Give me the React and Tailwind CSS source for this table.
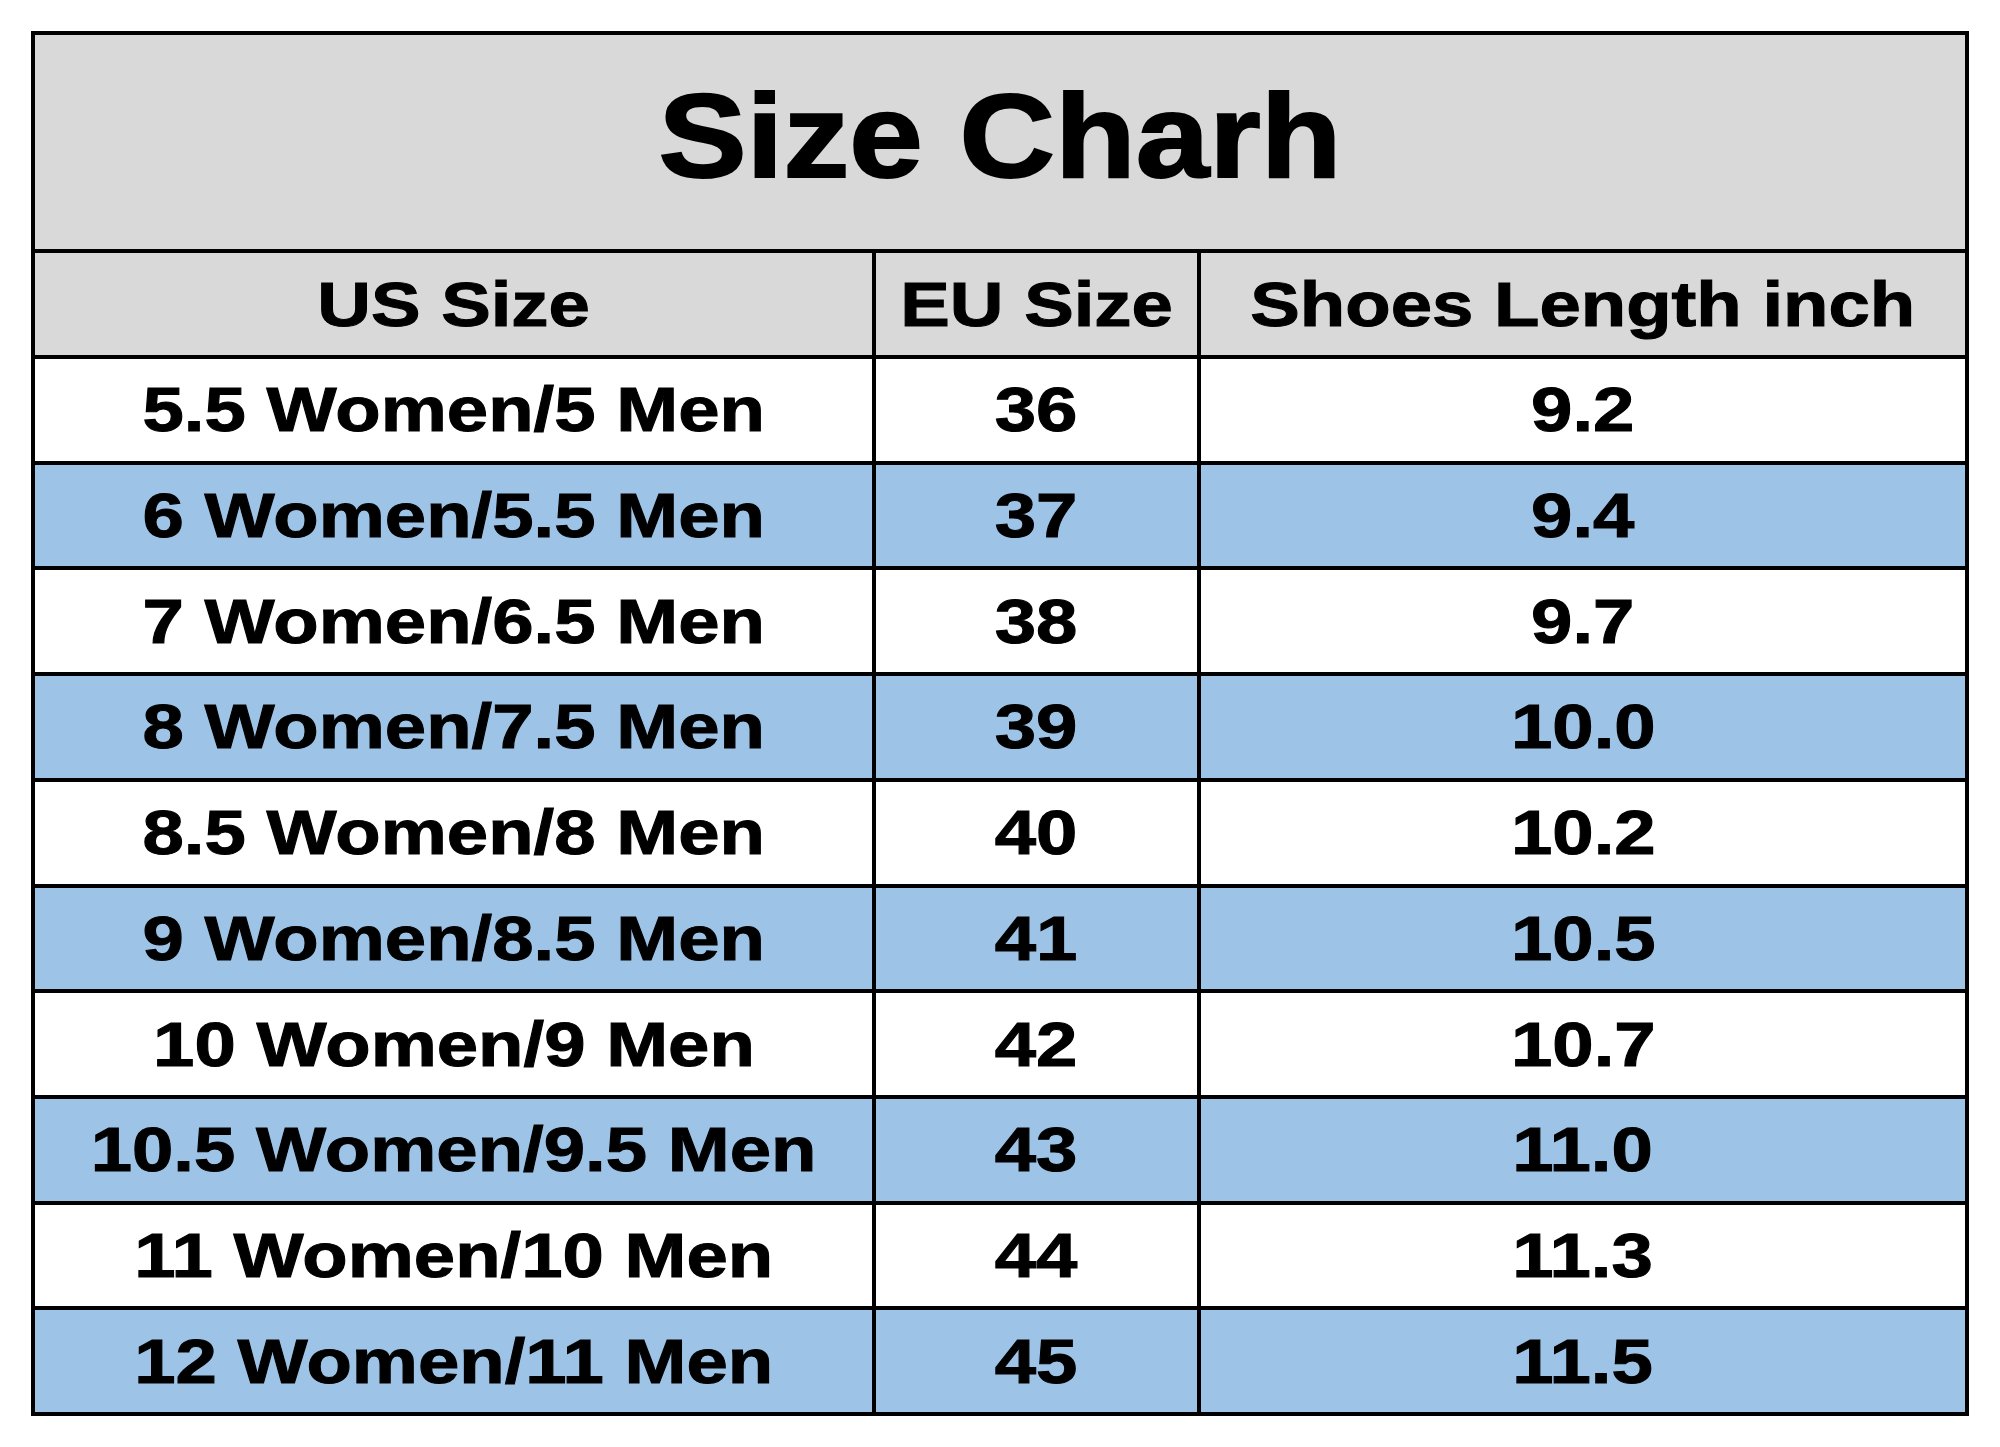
import React from 'react';

const rows = [
  ['5.5 Women/5 Men', '36', '9.2'],
  ['6 Women/5.5 Men', '37', '9.4'],
  ['7 Women/6.5 Men', '38', '9.7'],
  ['8 Women/7.5 Men', '39', '10.0'],
  ['8.5 Women/8 Men', '40', '10.2'],
  ['9 Women/8.5 Men', '41', '10.5'],
  ['10 Women/9 Men', '42', '10.7'],
  ['10.5 Women/9.5 Men', '43', '11.0'],
  ['11 Women/10 Men', '44', '11.3'],
  ['12 Women/11 Men', '45', '11.5'],
];

const Cell = ({ children, first }) => (
  <div className={`flex items-center justify-center ${first ? '' : 'border-l-4 border-black'}`}>
    <span className="inline-block scale-x-[1.18] text-[63px] leading-none font-bold whitespace-nowrap [-webkit-text-stroke:1px_#000]">
      {children}
    </span>
  </div>
);

export default function App() {
  return (
    <div className="w-[2000px] h-[1447px] bg-white pt-[31px] pl-[31px] font-['Liberation_Sans',Arial,sans-serif] text-black">
      <div className="w-[1938px] h-[1385px] border-4 border-black flex flex-col">
        {/* Title */}
        <div className="h-[214px] shrink-0 bg-[#d9d9d9] flex items-center justify-center pb-[12px]">
          <span className="inline-block scale-x-[1.12] text-[118px] leading-none font-bold [-webkit-text-stroke:2px_#000]">
            Size Charh
          </span>
        </div>

        {/* Header */}
        <div className="h-[106px] shrink-0 border-t-4 border-black bg-[#d9d9d9] grid grid-cols-[837px_325px_1fr]">
          <Cell first>US Size</Cell>
          <Cell>EU Size</Cell>
          <Cell>Shoes Length inch</Cell>
        </div>

        {/* Rows */}
        {rows.map((r, i) => (
          <div
            key={r[1]}
            className={`flex-1 border-t-4 border-black grid grid-cols-[837px_325px_1fr] ${i % 2 ? 'bg-[#9dc3e6]' : 'bg-white'}`}
          >
            <Cell first>{r[0]}</Cell>
            <Cell>{r[1]}</Cell>
            <Cell>{r[2]}</Cell>
          </div>
        ))}
      </div>
    </div>
  );
}
